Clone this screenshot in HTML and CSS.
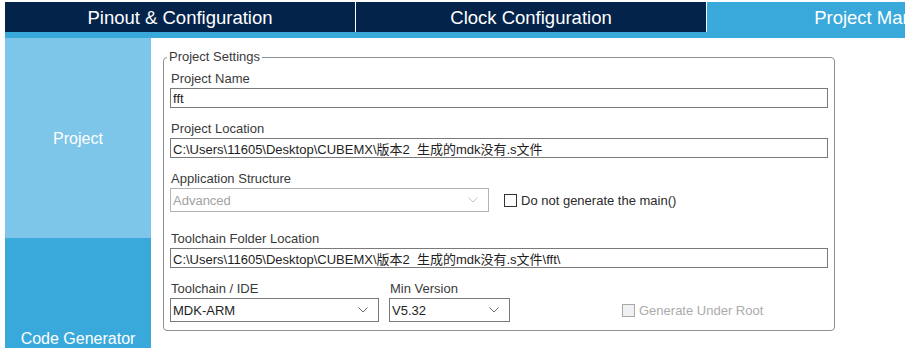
FILE: index.html
```html
<!DOCTYPE html>
<html lang="en">
<head>
    <meta charset="UTF-8">
    <title>Project Manager</title>
    <link rel="stylesheet" href="styles.css">
</head>
<body>
    <div class="tabs">
        <div class="tab">Pinout &amp; Configuration</div>
        <div class="tab">Clock Configuration</div>
        <div class="tab active">Project Manager</div>
    </div>
    <div class="strip"></div>
    <div class="main">
        <div class="sidebar">
            <div class="side-item selected">Project</div>
            <div class="side-item last">Code Generator</div>
        </div>
        <div class="content">
            <fieldset class="settings">
                <legend>Project Settings</legend>
                <div class="field">
                    <label>Project Name</label>
                    <input class="text" type="text" value="fft">
                </div>
                <div class="field">
                    <label>Project Location</label>
                    <input class="text" type="text" value="C:\Users\11605\Desktop\CUBEMX\版本2  生成的mdk没有.s文件">
                </div>
                <div class="field">
                    <label>Application Structure</label>
                    <div class="line">
                        <div class="select disabled w-app">
                            <span>Advanced</span>
                            <svg width="10" height="6" viewBox="0 0 10 6"><path d="M0.5 0.5 L5 5 L9.5 0.5" fill="none" stroke="#c4c4c4" stroke-width="1"/></svg>
                        </div>
                        <div class="check">
                            <span class="box"></span>
                            <span>Do not generate the main()</span>
                        </div>
                    </div>
                </div>
                <div class="field after-select">
                    <label>Toolchain Folder Location</label>
                    <input class="text" type="text" value="C:\Users\11605\Desktop\CUBEMX\版本2  生成的mdk没有.s文件\fft\">
                </div>
                <div class="field bottom-row">
                    <div class="col">
                        <label>Toolchain / IDE</label>
                        <div class="select w-ide">
                            <span>MDK-ARM</span>
                            <svg width="10" height="6" viewBox="0 0 10 6"><path d="M0.5 0.5 L5 5 L9.5 0.5" fill="none" stroke="#6b6b6b" stroke-width="1"/></svg>
                        </div>
                    </div>
                    <div class="col">
                        <label>Min Version</label>
                        <div class="select w-ver">
                            <span>V5.32</span>
                            <svg width="10" height="6" viewBox="0 0 10 6"><path d="M0.5 0.5 L5 5 L9.5 0.5" fill="none" stroke="#6b6b6b" stroke-width="1"/></svg>
                        </div>
                    </div>
                    <div class="check off">
                        <span class="box"></span>
                        <span>Generate Under Root</span>
                    </div>
                </div>
            </fieldset>
        </div>
    </div>
</body>
</html>
```

FILE: styles.css
```css
html {
    overflow: hidden;
}
body {
    margin: 0;
    padding: 2px 0 0 5px;
    background-color: #fff;
    font-family: "Liberation Sans", Arial, "Noto Sans CJK SC", sans-serif;
}
.tabs {
    display: flex;
    height: 30px;
    background-color: #03234b;
    overflow: hidden;
}
.tab {
    flex-shrink: 0;
    width: 350px;
    border-right: 1px solid #fff;
    color: #fff;
    font-size: 18.5px;
    line-height: 31px;
    text-align: center;
    white-space: nowrap;
}
.tab.active {
    background-color: #39a9dc;
}
.strip {
    height: 6px;
    background-color: #39a9dc;
}
.main {
    display: flex;
}
.sidebar {
    width: 146px;
    flex-shrink: 0;
}
.side-item {
    box-sizing: border-box;
    height: 200px;
    background-color: #39a9dc;
    color: #fff;
    font-size: 16px;
    display: flex;
    align-items: center;
    justify-content: center;
}
.side-item.selected {
    background-color: #7dc6ea;
    padding-top: 1px;
}
.side-item.last {
    height: 110px;
    align-items: flex-start;
    padding-top: 92px;
}
.content {
    padding: 11px 0 0 12px;
}
.settings {
    box-sizing: border-box;
    width: 672px;
    margin: 0;
    padding: 5px 6px 8px 6px;
    border: 1px solid #8c9196;
    border-radius: 4px;
    color: #3a3a3a;
    font-size: 13px;
}
.settings legend {
    margin-left: -3px;
    padding: 0 2px 0 2px;
    font-size: 13px;
    line-height: 16px;
}
.field {
    margin-bottom: 12px;
}
.field label {
    display: block;
    padding: 1px 0 0 1px;
    line-height: 16px;
    margin-bottom: 1px;
}
.text {
    box-sizing: border-box;
    display: block;
    width: 658px;
    height: 20px;
    margin: 0;
    padding: 0 2px;
    border: 1px solid #7a7a7a;
    font-family: "Liberation Sans", Arial, "Noto Sans CJK SC", sans-serif;
    font-size: 13px;
    color: #1e1e1e;
    outline: none;
}
.line {
    display: flex;
    align-items: center;
}
.select {
    box-sizing: border-box;
    height: 24px;
    border: 1px solid #7a7a7a;
    display: flex;
    align-items: center;
    justify-content: space-between;
    padding: 0 10px 0 2px;
    color: #1e1e1e;
    font-size: 13px;
}
.select.disabled {
    border-color: #b4b4b4;
    color: #a2a2a2;
}
.w-app {
    width: 319px;
}
.w-ide {
    width: 209px;
}
.w-ver {
    width: 121px;
}
.check {
    display: flex;
    align-items: center;
    margin-left: 15px;
    color: #2b2b2b;
    font-size: 13px;
}
.check .box {
    box-sizing: border-box;
    width: 13px;
    height: 13px;
    border: 1px solid #333;
    background-color: #fff;
    margin-right: 4px;
}
.check.off {
    color: #ababab;
    margin-left: 112px;
    align-self: flex-end;
    height: 24px;
}
.check.off .box {
    border-color: #a8a8a8;
    background-color: #eef0f2;
}
.after-select {
    margin-top: 18px;
}
.bottom-row {
    display: flex;
    margin-bottom: 0;
}
.col + .col {
    margin-left: 10px;
}
```
